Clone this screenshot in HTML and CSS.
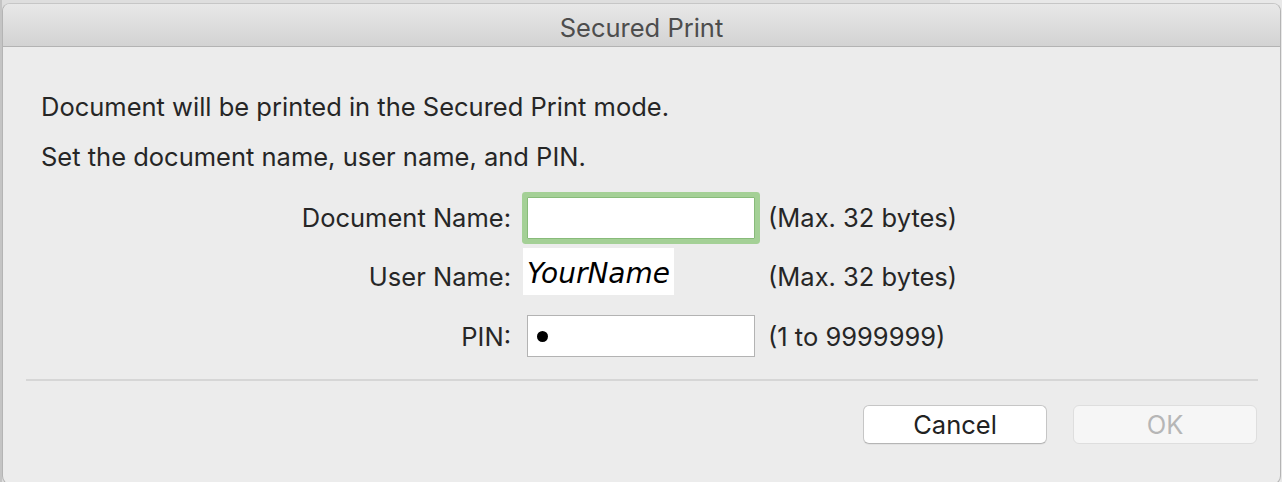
FILE: index.html
```html
<!DOCTYPE html>
<html lang="en">
<head>
<meta charset="utf-8">
<title>Secured Print</title>
<link rel="stylesheet" href="styles.css">
</head>
<body>
<div class="window">
  <div class="titlebar">Secured Print</div>
  <div class="content">
    <p class="msg msg-first">Document will be printed in the Secured Print mode.</p>
    <p class="msg msg-second">Set the document name, user name, and PIN.</p>
    <div class="form">
      <div class="row row-doc">
        <span class="label">Document Name:</span>
        <div class="cell"><div class="input focused"></div></div>
        <span class="note">(Max. 32 bytes)</span>
      </div>
      <div class="row row-user">
        <span class="label">User Name:</span>
        <div class="cell cell-user"><div class="username">YourName</div></div>
        <span class="note">(Max. 32 bytes)</span>
      </div>
      <div class="row row-pin">
        <span class="label">PIN:</span>
        <div class="cell"><div class="input pin"><span class="dot"></span></div></div>
        <span class="note">(1 to 9999999)</span>
      </div>
    </div>
    <div class="sep"></div>
    <div class="buttons">
      <button class="btn">Cancel</button>
      <button class="btn btn-disabled">OK</button>
    </div>
  </div>
</div>
</body>
</html>
```

FILE: styles.css
```css
html, body {
  margin: 0;
  padding: 0;
}
body {
  width: 1282px;
  height: 482px;
  overflow: hidden;
  background: linear-gradient(to right, #c4c4c4 0, #c4c4c4 2px, #dedede 2px, #dedede 950px, #e8e8e8 950px);
  font-family: Inter, "Liberation Sans", sans-serif;
  color: #262626;
}
.window {
  margin: 3px 1px 0 2px;
  height: 482px;
  box-sizing: border-box;
  border: 1px solid #b4b4b4;
  border-top-color: #c6c6c6;
  border-radius: 8px 8px 9px 9px;
  background: #ececec;
  overflow: hidden;
  display: flex;
  flex-direction: column;
}
.titlebar {
  height: 42px;
  flex: none;
  border-bottom: 1px solid #b3b3b3;
  background: linear-gradient(to bottom, #e8e8e8, #d3d3d3);
  text-align: center;
  line-height: 47px;
  font-size: 25.5px;
  color: #4d4d4d;
  overflow: hidden;
}
.content {
  display: flex;
  flex-direction: column;
}
.msg {
  margin: 0;
  padding-left: 38px;
  font-size: 25.5px;
  line-height: 30px;
}
.msg-first { margin-top: 45px; }
.msg-second { margin-top: 20px; }
.form {
  margin-top: 19px;
  display: flex;
  flex-direction: column;
}
.row {
  display: flex;
  align-items: center;
  font-size: 25.5px;
}
.row-doc { height: 54px; }
.row-user { height: 62px; }
.row-pin { height: 42px; margin-top: 8px; }
.row-doc .label, .row-doc .note { margin-bottom: 2px; }
.label {
  width: 508px;
  flex: none;
  text-align: right;
}
.cell {
  width: 240px;
  flex: none;
  margin-left: 10px;
  display: flex;
  align-items: center;
  align-self: stretch;
}
.cell-user {
  align-items: flex-start;
}
.note {
  margin-left: 7px;
}
.input {
  box-sizing: border-box;
  width: 228px;
  height: 42px;
  margin-left: 6px;
  background: #ffffff;
  border: 1px solid #b3b3b3;
  display: flex;
  align-items: center;
}
.focused {
  border-color: #88bb7a;
  border-radius: 1px;
  box-shadow: 0 0 0 5px #a4d096;
}
.username {
  margin-top: 3px;
  margin-left: 2px;
  width: 151px;
  height: 47px;
  box-sizing: border-box;
  padding-left: 4px;
  background: #ffffff;
  color: #000000;
  font-family: "DejaVu Sans", "Open Sans", sans-serif;
  font-style: italic;
  font-size: 28px;
  line-height: 51px;
  overflow: hidden;
  white-space: nowrap;
}
.dot {
  width: 11px;
  height: 11px;
  margin-left: 9px;
  border-radius: 50%;
  background: #000000;
}
.sep {
  height: 2px;
  margin: 22px 22px 0 23px;
  background: #d6d6d6;
}
.buttons {
  margin-top: 24px;
  padding-right: 23px;
  display: flex;
  justify-content: flex-end;
  gap: 26px;
}
.btn {
  width: 184px;
  height: 39px;
  box-sizing: border-box;
  border: 1px solid #c6c6c6;
  border-bottom-color: #b5b5b5;
  border-radius: 6px;
  background: #ffffff;
  font-family: Inter, "Liberation Sans", sans-serif;
  font-size: 25.5px;
  color: #222222;
  padding: 0;
  box-shadow: 0 1px 0 rgba(0, 0, 0, 0.04);
}
.btn-disabled {
  background: #f6f6f6;
  border-color: #dedede;
  color: #b6b6b6;
  box-shadow: none;
}
```
